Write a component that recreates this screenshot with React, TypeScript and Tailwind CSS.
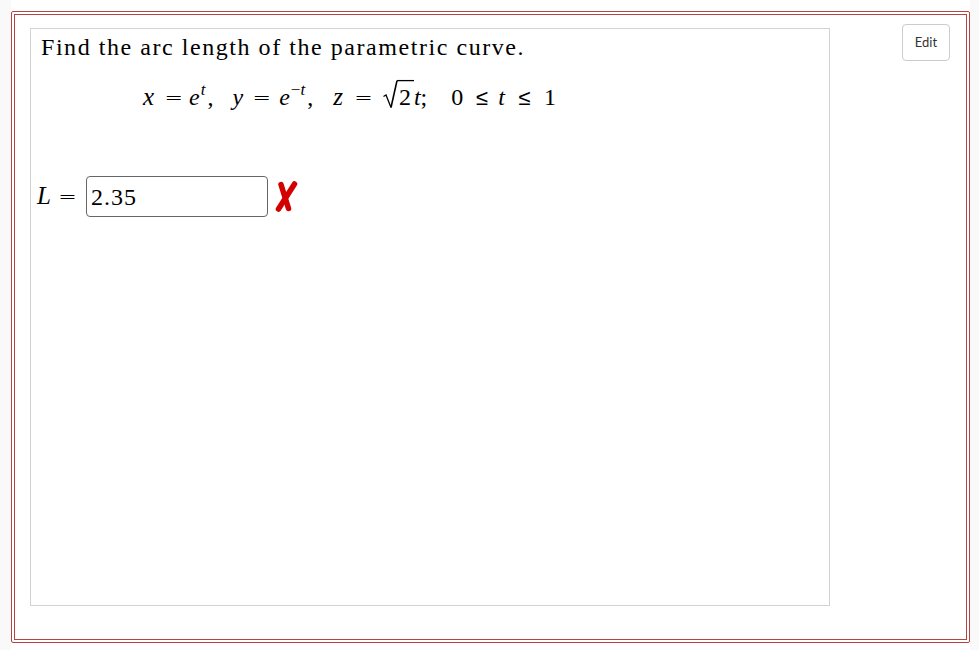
import { JSX, ReactNode } from 'react'

const serif = { fontFamily: '"Liberation Serif", "DejaVu Serif", serif' }
const relFont = { fontFamily: '"DejaVu Sans", sans-serif' }

const Var = ({ children, className = '' }: { children: ReactNode; className?: string }): JSX.Element => (
  <i className={`italic ${className}`}>{children}</i>
)

const Rel = ({ sym, className = '' }: { sym: string; className?: string }): JSX.Element => (
  <span className={`inline-block text-center font-light ${className}`} style={relFont}>
    {sym}
  </span>
)

export default function App(): JSX.Element {
  return (
    <div className="w-[979px] h-[650px] bg-[#f9f9f9] flex">
      <div className="ml-[11px] w-[959px] h-full bg-white pt-[11px]">
        <div className="h-[632px] border border-[#b5433f] rounded-[2px] p-[2px]">
          <div className="h-full border border-[#b5433f] flex items-start">
            <div
              className="ml-[15px] mt-[13px] w-[800px] h-[578px] border border-[#d3d3d3] text-black"
              style={serif}
            >
              <p className="pl-[10px] pt-[3px] text-[24px] leading-[30px] tracking-[1.55px]">
                Find the arc length of the parametric curve.
              </p>
              <p className="pl-[112px] pt-[20px] text-[24px] leading-[30px] whitespace-nowrap flex items-baseline">
                <Var className="text-[25px]">x</Var>
                <Rel sym="=" className="w-[21px] ml-[9px] text-[22px]" />
                <Var className="ml-[5px]">e</Var>
                <span className="relative -top-[10px] text-[17px] ml-[1px]"><Var>t</Var></span>
                <span className="ml-[2px]">,</span>
                <Var className="ml-[19px]">y</Var>
                <Rel sym="=" className="w-[21px] ml-[8px] text-[22px]" />
                <Var className="ml-[7px]">e</Var>
                <span className="relative -top-[10px] text-[17px] ml-[1px]">−<Var>t</Var></span>
                <span className="ml-[2px]">,</span>
                <Var className="ml-[20px] text-[25px]">z</Var>
                <Rel sym="=" className="w-[21px] ml-[10px] text-[22px]" />
                <span className="relative inline-block ml-[9px] pl-[16px] pr-[1px]">
                  <svg className="absolute left-0 -top-[3px]" width="31" height="32" viewBox="0 0 31 32">
                    <path d="M0.5 17.5 L3 16 L8 28.5" stroke="#000" strokeWidth="1.3" fill="none" />
                    <path d="M8 28.5 L14 1.6" stroke="#000" strokeWidth="1.6" fill="none" />
                    <path d="M14 1.6 H31" stroke="#000" strokeWidth="1.3" fill="none" />
                  </svg>
                  2
                </span>
                <Var className="ml-[2px]">t</Var>
                <span>;</span>
                <span className="ml-[24px]">0</span>
                <Rel sym="≤" className="w-[17px] ml-[10px] text-[22px]" />
                <Var className="ml-[8px]">t</Var>
                <Rel sym="≤" className="w-[17px] ml-[11px] text-[22px]" />
                <span className="ml-[11px]">1</span>
              </p>
              <div className="flex items-center pl-[6px] mt-[61px]">
                <span className="text-[24px] leading-[30px] whitespace-nowrap flex items-baseline">
                  <Var className="text-[25px]">L</Var>
                  <Rel sym="=" className="w-[21px] ml-[6px] text-[22px]" />
                </span>
                <div className="ml-[8px] w-[182px] h-[41px] border border-[#666] rounded-[4px] flex items-center pl-[4px] text-[24px] tracking-[1px]">
                  2.35
                </div>
                <svg className="ml-[7px]" width="23" height="31" viewBox="0 0 23 31">
                  <path d="M6 3.5 L13.5 27.5" stroke="#d40000" strokeWidth="5.5" strokeLinecap="round" />
                  <path d="M19.5 3 L3.5 28" stroke="#d40000" strokeWidth="5.5" strokeLinecap="round" />
                </svg>
              </div>
            </div>
            <button
              className="ml-auto mr-[16px] mt-[9px] w-[48px] h-[37px] border border-[#cccccc] rounded-[4px] bg-white text-[13px] text-[#333]"
              style={{ fontFamily: 'Lato, "Open Sans", sans-serif' }}
            >
              Edit
            </button>
          </div>
        </div>
      </div>
    </div>
  )
}
